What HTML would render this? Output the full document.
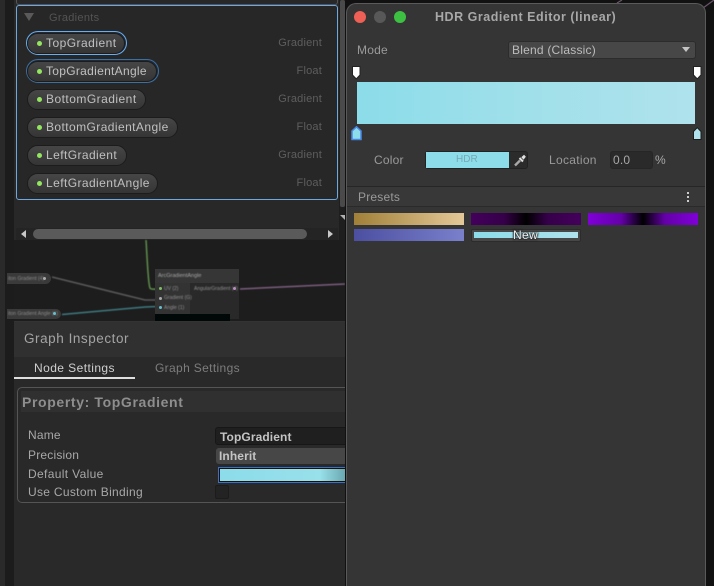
<!DOCTYPE html>
<html><head><meta charset="utf-8"><style>
html,body{margin:0;padding:0;background:#1c1c1c;}
#r{position:relative;width:714px;height:586px;overflow:hidden;background:#1a1a1a;font-family:"Liberation Sans",sans-serif;}
#r div{position:absolute;box-sizing:border-box;}
.t{white-space:nowrap;line-height:14px;}
.pill{height:21px;border-radius:11px;background:linear-gradient(#464646,#353535);border:1px solid #1c1c1c;left:27px;}
.pill i{position:absolute;left:9px;top:7px;width:5px;height:5px;border-radius:50%;background:#94e660;}
.pill span{position:absolute;left:18px;top:2px;font-size:12px;line-height:14px;color:#c0c0c0;letter-spacing:.47px;white-space:nowrap;}
.ty{right:392px;font-size:11px;color:#5e5e5e;letter-spacing:.2px;}
</style></head><body><div id="r">
<!-- left strip -->
<div style="left:0;top:0;width:5px;height:586px;background:#2a2a2a"></div>
<div style="left:5px;top:0;width:9px;height:586px;background:#1c1c1c"></div>
<!-- blackboard -->
<div style="left:14px;top:0;width:331px;height:240px;background:#282828"></div>
<div style="left:16px;top:0;width:322px;height:5px;border:1px solid #555;border-top:0;border-radius:0 0 3px 3px"></div>
<div style="left:16px;top:5px;width:322px;height:195px;border:1px solid #6fa8df;border-radius:3px;background:#272727"></div>
<svg style="position:absolute;left:24px;top:13px" width="10" height="9"><path d="M0 0H10L5 8Z" fill="#5a5a5a"/></svg>
<div class="t" style="left:49px;top:11px;font-size:11px;color:#545454;letter-spacing:.3px">Gradients</div>
<div style="left:26px;top:31px;width:101px;height:24px;border:1px solid #68aef0;border-radius:12px;background:#1f2a38"></div>
<div style="left:26px;top:59px;width:133px;height:24px;border:1px solid #3d6fa0;border-radius:12px;background:#1f2a38"></div>
<div class="pill" style="top:33px;width:98px"><i></i><span>TopGradient</span></div>
<div class="pill" style="top:61px;width:130px"><i></i><span style="letter-spacing:.3px">TopGradientAngle</span></div>
<div class="pill" style="top:89px;width:119px"><i></i><span>BottomGradient</span></div>
<div class="pill" style="top:117px;width:151px"><i></i><span style="letter-spacing:.42px">BottomGradientAngle</span></div>
<div class="pill" style="top:145px;width:100px"><i></i><span style="letter-spacing:.42px">LeftGradient</span></div>
<div class="pill" style="top:173px;width:131px"><i></i><span style="letter-spacing:.42px">LeftGradientAngle</span></div>
<div class="t ty" style="top:36px">Gradient</div>
<div class="t ty" style="top:64px">Float</div>
<div class="t ty" style="top:92px">Gradient</div>
<div class="t ty" style="top:120px">Float</div>
<div class="t ty" style="top:148px">Gradient</div>
<div class="t ty" style="top:176px">Float</div>
<!-- scrollbars -->
<div style="left:339px;top:0;width:6px;height:240px;background:#1e1e1e"></div>
<div style="left:340px;top:0;width:5px;height:207px;background:#4a4a4a;border-radius:2px"></div>
<svg style="position:absolute;left:340px;top:215px" width="5" height="6"><path d="M0 0H5V5Z" fill="#b0b0b0"/></svg>
<div style="left:16px;top:228px;width:322px;height:12px;background:#242424"></div>
<div style="left:33px;top:229px;width:274px;height:10px;background:#5a5a5a;border-radius:5px"></div>
<svg style="position:absolute;left:21px;top:230px" width="6" height="8"><path d="M5 0V8L0 4Z" fill="#c8c8c8"/></svg>
<svg style="position:absolute;left:328px;top:230px" width="6" height="8"><path d="M0 0V8L5 4Z" fill="#c8c8c8"/></svg>
<!-- graph -->
<div style="left:14px;top:240px;width:331px;height:82px;background:#1d1d1d"></div>
<svg style="position:absolute;left:0;top:240px;filter:blur(.4px)" width="345" height="82" fill="none">
<path d="M146 0C147 14 148 44 150 48Q150 49.500 158 49" stroke="#5f8f4c" stroke-width="1.500"/>
<path d="M52 37L145 60H158" stroke="#5a5a5a" stroke-width="1.500"/>
<path d="M62 74.500L145 67L158 66.500" stroke="#3f7a80" stroke-width="1.500"/>
<path d="M240 49L345 44" stroke="#7c5c7e" stroke-width="1.500"/>
</svg>
<div style="left:7px;top:273px;width:44px;height:11px;background:#3a3a3a;border-radius:0 6px 6px 0"></div>
<div class="t" style="left:8px;top:272px;font-size:5px;color:#8a8a8a;white-space:nowrap;filter:blur(.4px)">iton Gradient (4)</div>
<div style="left:43px;top:277px;width:3px;height:3px;background:#aaa;border-radius:50%"></div>
<div style="left:7px;top:309px;width:54px;height:10px;background:#3a3a3a;border-radius:0 6px 6px 0"></div>
<div class="t" style="left:8px;top:307px;font-size:5px;color:#8a8a8a;white-space:nowrap;filter:blur(.4px)">iton Gradient Angle (1)</div>
<div style="left:53px;top:312px;width:3px;height:3px;background:#66c0cc;border-radius:50%"></div>
<div style="left:155px;top:269px;width:84px;height:50px;background:#292929"></div>
<div style="left:155px;top:269px;width:84px;height:14px;background:#363636"></div>
<div class="t" style="left:158px;top:269px;font-size:5.500px;color:#a8a8a8;filter:blur(.4px)">ArcGradientAngle</div>
<div style="left:155px;top:283px;width:35px;height:36px;background:#333"></div>
<div style="left:159px;top:287px;width:3px;height:3px;border-radius:50%;background:#7fc060"></div>
<div style="left:159px;top:297px;width:3px;height:3px;border-radius:50%;background:#aaa"></div>
<div style="left:159px;top:306px;width:3px;height:3px;border-radius:50%;background:#66c0cc"></div>
<div class="t" style="left:164px;top:282px;font-size:5px;color:#909090;filter:blur(.4px)">UV (2)</div>
<div class="t" style="left:164px;top:291px;font-size:5px;color:#909090;filter:blur(.4px)">Gradient (G)</div>
<div class="t" style="left:164px;top:301px;font-size:5px;color:#909090;filter:blur(.4px)">Angle (1)</div>
<div class="t" style="left:194px;top:282px;font-size:5px;color:#909090;white-space:nowrap;filter:blur(.4px)">AngularGradient (4)</div>
<div style="left:233px;top:287px;width:3px;height:3px;border-radius:50%;background:#b88cc0"></div>
<div style="left:155px;top:314px;width:75px;height:8px;background:#010808"></div>
<!-- inspector -->
<div style="left:14px;top:321px;width:331px;height:265px;background:#292929;border-top:1px solid #333"></div>
<div style="left:14px;top:322px;width:331px;height:35px;background:#303030"></div>
<div class="t" style="left:24px;top:331px;font-size:13.500px;line-height:16px;color:#a4a4a4;letter-spacing:.55px">Graph Inspector</div>
<div class="t" style="left:34px;top:361px;font-size:12px;color:#cfcfcf;letter-spacing:.43px">Node Settings</div>
<div class="t" style="left:155px;top:361px;font-size:12px;color:#7d7d7d;letter-spacing:.35px">Graph Settings</div>
<div style="left:14px;top:377px;width:121px;height:2px;background:#dedede"></div>
<div style="left:17px;top:387px;width:340px;height:116px;border:1px solid #555;border-radius:5px"></div>
<div style="left:21px;top:391px;width:324px;height:21px;background:#303030"></div>
<div class="t" style="left:22px;top:394px;font-size:14px;line-height:16px;font-weight:bold;color:#8e8e8e;letter-spacing:.63px">Property: TopGradient</div>
<div class="t" style="left:28px;top:428px;font-size:12px;color:#a8a8a8;letter-spacing:.2px">Name</div>
<div class="t" style="left:28px;top:448px;font-size:12px;color:#a8a8a8;letter-spacing:.2px">Precision</div>
<div class="t" style="left:28px;top:467px;font-size:12px;color:#a8a8a8;letter-spacing:.35px">Default Value</div>
<div class="t" style="left:28px;top:485px;font-size:12px;color:#a8a8a8;letter-spacing:.31px">Use Custom Binding</div>
<div style="left:215px;top:427px;width:140px;height:18px;background:#1f1f1f;border:1px solid #171717;border-radius:3px"></div>
<div class="t" style="left:220px;top:430px;font-size:12px;font-weight:bold;color:#c4c4c4;letter-spacing:.1px">TopGradient</div>
<div style="left:216px;top:448px;width:140px;height:16px;background:#474747;border-radius:3px"></div>
<div class="t" style="left:219px;top:449px;font-size:12px;font-weight:bold;color:#c4c4c4;letter-spacing:.1px">Inherit</div>
<div style="left:218px;top:467px;width:130px;height:16px;border:1px solid #3f6fc0;background:#111"></div>
<div style="left:220px;top:469px;width:125px;height:12px;background:linear-gradient(90deg,#8cdcea,#98e0ea 80%,#6aa8b0)"></div>
<div style="left:215px;top:485px;width:14px;height:14px;background:#232323;border:1px solid #1c1c1c;border-radius:2px"></div>
<!-- background around window -->
<div style="left:345px;top:0;width:369px;height:586px;background:#111"></div>
<svg style="position:absolute;left:600px;top:0" width="114" height="12" fill="none"><path d="M103 8L114 0" stroke="#6a566c" stroke-width="1.200"/><path d="M17 3L22 0" stroke="#6a566c" stroke-width="1.200"/></svg>
<!-- window -->
<div style="left:346px;top:3px;width:316px;height:583px;background:#353535;border:1px solid #5a5a5a;border-right:0;border-bottom:0;border-radius:10px 0 0 0"></div>
<div style="left:660px;top:3px;width:46px;height:583px;background:#353535;border:1px solid #5a5a5a;border-left:0;border-bottom:0;border-radius:0 10px 0 0"></div>
<div style="left:354px;top:11px;width:12px;height:12px;border-radius:50%;background:#ee5f55"></div>
<div style="left:374px;top:11px;width:12px;height:12px;border-radius:50%;background:#585858"></div>
<div style="left:394px;top:11px;width:12px;height:12px;border-radius:50%;background:#3cc143"></div>
<div class="t" style="left:435px;top:9px;font-size:12.500px;line-height:16px;font-weight:bold;color:#a8a8a8;letter-spacing:.52px">HDR Gradient Editor (linear)</div>
<div class="t" style="left:357px;top:43px;font-size:12px;color:#9a9a9a;letter-spacing:.2px">Mode</div>
<div style="left:508px;top:41px;width:188px;height:18px;background:#474747;border:1px solid #2c2c2c;border-radius:3px"></div>
<div class="t" style="left:512px;top:43px;font-size:12px;color:#bcbcbc;letter-spacing:.22px">Blend (Classic)</div>
<svg style="position:absolute;left:682px;top:47px" width="8" height="6"><path d="M0 0H8L4 5Z" fill="#c4c4c4"/></svg>
<!-- gradient -->
<div style="left:357px;top:82px;width:338px;height:42px;background:linear-gradient(90deg,#8cdcea,#a0e0ea 50%,#afe2ec)"></div>
<svg style="position:absolute;left:352px;top:66px" width="9" height="14"><path d="M.5 .5H8V9L4.250 12.800L.5 9Z" fill="#fff" stroke="#222"/></svg>
<svg style="position:absolute;left:693px;top:66px" width="9" height="14"><path d="M.5 .5H8V9L4.250 12.800L.5 9Z" fill="#fff" stroke="#222"/></svg>
<svg style="position:absolute;left:351px;top:126px" width="12" height="15"><path d="M1 13.500V5L5.500 .8L10 5V13.500Z" fill="#8cdcea" stroke="#4a86e8" stroke-width="1.500"/></svg>
<svg style="position:absolute;left:693px;top:127px" width="9" height="14"><path d="M.5 12.500V4.500L4.250 .7L8 4.500V12.500Z" fill="#afe2ec" stroke="#1c1c1c"/></svg>
<!-- color row -->
<div class="t" style="left:374px;top:153px;font-size:12px;color:#9a9a9a;letter-spacing:.2px">Color</div>
<div style="left:425px;top:151px;width:103px;height:18px;background:#2b2b2b;border:1px solid #222;border-radius:3px"></div>
<div style="left:426px;top:152px;width:83px;height:16px;background:#8cdcea"></div>
<div class="t" style="left:456px;top:153px;font-size:10px;color:#78a8b4">HDR</div>
<svg style="position:absolute;left:513px;top:154px" width="14" height="13" fill="none"><path d="M2 11.500L7 6.500" stroke="#a8a8a8" stroke-width="2.400"/><path d="M6.500 4L10 7.500" stroke="#e0e0e0" stroke-width="2"/><path d="M9 3.200L11 1.500L12.200 2.800L10.500 5Z" fill="#e0e0e0" stroke="#e0e0e0"/></svg>
<div class="t" style="left:549px;top:153px;font-size:12px;color:#9a9a9a;letter-spacing:.3px">Location</div>
<div style="left:610px;top:151px;width:43px;height:18px;background:#2a2a2a;border:1px solid #262626;border-radius:3px"></div>
<div class="t" style="left:613px;top:153px;font-size:12px;color:#a8a8a8;letter-spacing:.2px">0.0</div>
<div class="t" style="left:655px;top:153px;font-size:12px;color:#a8a8a8">%</div>
<!-- presets -->
<div style="left:347px;top:186px;width:358px;height:1px;background:#262626"></div>
<div style="left:347px;top:187px;width:358px;height:20px;background:#383838;border-bottom:1px solid #2a2a2a"></div>
<div class="t" style="left:358px;top:190px;font-size:12px;color:#9a9a9a;letter-spacing:.2px">Presets</div>
<div style="left:687px;top:192px;width:2px;height:2px;background:#ccc"></div>
<div style="left:687px;top:196px;width:2px;height:2px;background:#ccc"></div>
<div style="left:687px;top:200px;width:2px;height:2px;background:#ccc"></div>
<div style="left:354px;top:213px;width:110px;height:12px;background:linear-gradient(90deg,#a08038,#e4c898)"></div>
<div style="left:471px;top:213px;width:110px;height:12px;background:linear-gradient(90deg,#44005c,#36004a 30%,#000 50%,#36004a 70%,#44005c)"></div>
<div style="left:588px;top:213px;width:110px;height:12px;background:linear-gradient(90deg,#8000d8,#6400a8 30%,#000 50%,#6400a8 70%,#8000d8)"></div>
<div style="left:354px;top:229px;width:110px;height:12px;background:linear-gradient(90deg,#4c4fa0,#7a80cc)"></div>
<div style="left:471px;top:229px;width:110px;height:13px;background:#474747;border:1px solid #2c2c2c;border-radius:2px"></div>
<div style="left:474px;top:232px;width:104px;height:6px;background:linear-gradient(90deg,#8cdcea,#afe2ec)"></div>
<div class="t" style="left:513px;top:228px;font-size:12px;color:#f0f0f0;text-shadow:0 0 2px #222,0 0 2px #222,0 0 2px #222,0 0 1px #222;letter-spacing:.3px">New</div>
</div></body></html>
